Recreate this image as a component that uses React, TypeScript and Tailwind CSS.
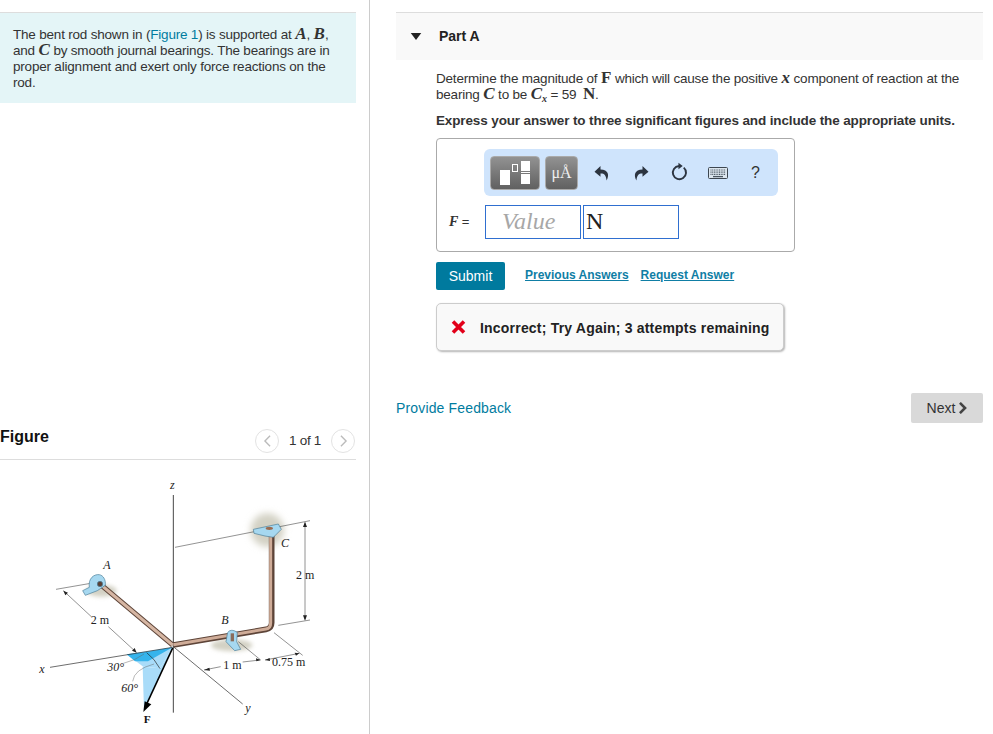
import React from "react";

const Math = ({ children, className = "" }: { children: React.ReactNode; className?: string }) => (
  <span className={`font-['Liberation_Serif',serif] italic font-bold text-[17px] tracking-normal leading-[0] ${className}`}>{children}</span>
);

function Diagram() {
  const serif = "'Liberation Serif', serif";
  const label = (x: number, y: number, t: string, italic = false, size = 36) => (
    <text x={x} y={y} fontFamily={serif} fontSize={size} fontStyle={italic ? "italic" : "normal"} fill="#222">
      {t}
    </text>
  );
  return (
    <svg viewBox="0 0 960 792" className="block w-[320px] h-[264px]">
      <defs>
        <filter id="b" x="-50%" y="-50%" width="200%" height="200%">
          <feGaussianBlur stdDeviation="11" />
        </filter>
        <filter id="b2" x="-50%" y="-50%" width="200%" height="200%">
          <feGaussianBlur stdDeviation="7" />
        </filter>
      </defs>
      <ellipse cx="742" cy="180" rx="50" ry="50" fill="#d3d1c4" filter="url(#b)" />
      <ellipse cx="245" cy="362" rx="45" ry="18" fill="#d3d1c4" filter="url(#b2)" />
      <ellipse cx="635" cy="526" rx="62" ry="18" fill="#d3d1c4" filter="url(#b2)" />

      <g stroke="#333" strokeWidth="1.6" fill="none">
        <path d="M465 232L870 152M775 466L870 450M108 358L212 340M130 362L214 440M265 470L350 548" />
        <path d="M855 158V448M762 488L848 556M655 515L722 570M735 570L838 550M552 600L602 590M668 576L720 570" />
      </g>
      <path d="M855 155l-6 16h12zM855 452l-6-16h12z" fill="#222" />
      <path d="M130 362l14 6-8 8zM350 548l-14-6 8-8zM552 600l16-7 2 9zM722 570l-14-5 1 9zM735 570l14-6 1 9zM838 550l-14-2 4 9z" fill="#222" />

      <path d="M368 590L420 595L458 532L372 722Z" fill="#a9dcf9" />
      <path d="M320 553L458 532L420 595L370 590Z" fill="#a9dcf9" />
      <path d="M320 553L384 545L458 532L384 574L345 574Z" fill="#36b4ec" />
      <g stroke="#222" strokeWidth="2" fill="none">
        <path d="M90 592L458 532" />
        <path d="M460 75V728" strokeWidth="2.5" />
        <path d="M460 530L668 702" />
        <path d="M380 548Q404 566 420 596" strokeWidth="2" />
        <path d="M310 580Q345 572 372 552" stroke="#666" strokeWidth="1.4" />
        <path d="M338 634Q342 598 402 582" stroke="#666" strokeWidth="1.4" />
      </g>
      <path d="M458 534L380 702" stroke="#000" strokeWidth="5" />
      <path d="M370 726L374 694L394 703Z" fill="#000" />

      <path d="M240 342L458 525" stroke="#5d4438" strokeWidth="15" fill="none" />
      <path d="M240 342L458 525" stroke="#d6b6a3" strokeWidth="9" fill="none" />
      <path d="M460 525L738 478Q755 475 755 458V196" stroke="#5d4438" strokeWidth="17" fill="none" />
      <path d="M460 524L738 477Q752 475 752 458V196" stroke="#cfac98" strokeWidth="9" fill="none" />

      <path d="M188 362L208 352C204 325 222 312 238 314C250 316 258 330 256 346L232 362L196 376Z" fill="#a6d8f0" stroke="#4a7c96" strokeWidth="2" />
      <circle cx="240" cy="342" r="8" fill="#5b4034" stroke="#4a7c96" strokeWidth="2" />
      <path d="M622 492C624 478 642 478 652 488L650 515L662 538L644 542L618 515Z" fill="#a6d8f0" stroke="#4a7c96" strokeWidth="2" />
      <path d="M632 490h10v24h-10z" fill="#8a6d5c" />
      <path d="M700 178L775 162L784 178L760 202L735 198L702 190Z" fill="#a6d8f0" stroke="#4a7c96" strokeWidth="2" />
      <ellipse cx="748" cy="175" rx="11" ry="5" fill="#9b6b50" />

      {label(450, 58, "z", true)}
      {label(250, 298, "A", true)}
      {label(604, 462, "B", true)}
      {label(783, 231, "C", true)}
      {label(58, 610, "x", true)}
      {label(676, 725, "y", true)}
      {label(828, 327, "2 m")}
      {label(212, 463, "2 m")}
      {label(610, 597, "1 m")}
      {label(756, 588, "0.75 m")}
      {label(262, 602, "30°", true)}
      {label(304, 667, "60°", true)}
      <text x="371" y="759" fontFamily={serif} fontSize="34" fontWeight="bold" fill="#111">F</text>
    </svg>
  );
}

const Undo = ({ flip = false }: { flip?: boolean }) => (
  <svg viewBox="0 0 16 16" className={`w-[16px] h-[16px] shrink-0 ${flip ? "-scale-x-100" : ""}`} fill="#2c3440">
    <path d="M6.5 1L0.5 6.8L6.5 11.8V8.6C10 8.4 12 10 12.6 15.5C15.5 10 14.5 4.6 6.5 4.4Z" />
  </svg>
);

const Keyboard = () => (
  <svg viewBox="0 0 20 12" className="w-[20px] h-[12px] shrink-0">
    <rect x="0.5" y="0.5" width="19" height="11" rx="1" fill="#dbe5ee" stroke="#3d4650" />
    <path d="M2.5 3H17.5M2.5 5.2H17.5M2.5 7.4H17.5" stroke="#4a5560" strokeWidth="1.2" strokeDasharray="1 0.7" />
    <path d="M5 9.6H15" stroke="#4a5560" strokeWidth="1.3" />
  </svg>
);

export default function App() {
  return (
    <div className="flex h-[734px] w-[993px] overflow-hidden bg-white font-['Liberation_Sans',Arial,sans-serif] text-[14px] leading-4 text-[#333]">
      <div className="w-[370px] shrink-0 border-r border-[#ccc] pt-3">
        <div className="w-[356px]">
          <div className="whitespace-nowrap border-t border-[#ddd] bg-[#e4f5f7] px-[13px] pb-[12px] pt-[14px] text-[13.5px] tracking-[-0.2px]">
            The bent rod shown in (<span className="text-[#007c9f]">Figure 1</span>) is supported at <Math>A</Math>, <Math>B</Math>,
            <br />
            and <Math>C</Math> by smooth journal bearings. The bearings are in
            <br />
            proper alignment and exert only force reactions on the
            <br />
            rod.
          </div>
          <div className="mt-[320px] flex h-[37px] items-center justify-between border-b border-[#ddd] pb-[8px]">
            <span className="text-[16px] font-bold text-[#111]">Figure</span>
            <div className="flex items-center gap-[10px] pr-[1px] pt-[7px]">
              <span className="flex h-[24px] w-[24px] items-center justify-center rounded-full border border-[#e3e3e3] text-[#bbb]">
                <svg viewBox="0 0 10 14" className="h-[12px] w-[9px]" fill="none" stroke="#bbb" strokeWidth="1.6"><path d="M8 1L2 7L8 13" /></svg>
              </span>
              <span className="text-[13.5px] tracking-[-0.3px] text-[#333]">1 of 1</span>
              <span className="flex h-[24px] w-[24px] items-center justify-center rounded-full border border-[#e3e3e3]">
                <svg viewBox="0 0 10 14" className="h-[12px] w-[9px]" fill="none" stroke="#bbb" strokeWidth="1.6"><path d="M2 1L8 7L2 13" /></svg>
              </span>
            </div>
          </div>
          <div className="ml-[20px] mt-[10px]">
            <Diagram />
          </div>
        </div>
      </div>

      <div className="ml-[26px] w-[587px] shrink-0 pt-3">
        <div className="flex h-[48px] items-center border-t border-[#ddd] bg-[#f9f9f9] pb-[2px]">
          <svg viewBox="0 0 12 8" className="ml-[14px] mt-[2px] h-[7px] w-[12px]" fill="#222"><path d="M0 0H12L6 8Z" /></svg>
          <span className="ml-[17px] font-bold text-[#222]">Part A</span>
        </div>
        <div className="pl-[40px]">
          <p className="mt-[11px] whitespace-nowrap text-[13.5px] tracking-[-0.2px]">
            Determine the magnitude of <Math className="not-italic">F</Math> which will cause the positive <Math className="text-[15px]">x</Math> component of reaction at the
            <br />
            bearing <Math>C</Math> to be <Math>C<sub className="text-[10px]">x</sub></Math> = 59 <span className="ml-[3px] font-['Liberation_Serif',serif] text-[17px] font-bold leading-[0]">N</span>.
          </p>
          <p className="mt-[10px] whitespace-nowrap text-[13.5px] font-bold tracking-[-0.13px]">Express your answer to three significant figures and include the appropriate units.</p>

          <div className="mt-[9px] h-[114px] w-[359px] rounded-[4px] border border-[#aaa] pl-[47px] pt-[10px]">
            <div className="flex h-[47px] w-[294px] items-center rounded-[6px] bg-[#cfe4fc] pl-[6px] text-[#333]">
              <div className="flex h-[34px] w-[50px] shrink-0 items-center justify-center gap-[2px] rounded-[4px] border border-[#aaa] bg-gradient-to-b from-[#929292] to-[#616161]">
                <span className="mt-[10px] block h-[15px] w-[10px] bg-white" />
                <span className="mb-[10px] block h-[8px] w-[6px] border border-white" />
                <span className="ml-[1px] flex flex-col gap-[1px]">
                  <span className="block h-[10px] w-[9px] bg-white" />
                  <span className="block h-[1px] w-[9px] bg-white" />
                  <span className="block h-[10px] w-[9px] bg-white" />
                </span>
              </div>
              <div className="ml-[5px] flex h-[34px] w-[33px] shrink-0 items-center justify-center rounded-[4px] border border-[#aaa] bg-gradient-to-b from-[#929292] to-[#616161] font-['Liberation_Serif',serif] text-[16px] text-[#eee]">
                μÅ
              </div>
              <div className="ml-[16px] flex w-[16px] justify-center"><Undo /></div>
              <div className="ml-[23px] flex w-[16px] justify-center"><Undo flip /></div>
              <div className="ml-[22px] flex w-[16px] justify-center">
                <svg viewBox="0 0 16 16" className="h-[17px] w-[17px] shrink-0 overflow-visible" fill="none" stroke="#2c3440" strokeWidth="1.8">
                  <path d="M12 3.4A6.2 6.2 0 1 1 7.5 1.9" />
                  <path d="M7 -1.2L7 5L11 1.8Z" fill="#2c3440" stroke="none" />
                </svg>
              </div>
              <div className="ml-[21px] flex w-[20px] justify-center"><Keyboard /></div>
              <div className="ml-[23px] text-[16px] text-[#333]">?</div>
            </div>
            <div className="-ml-[35px] mt-[9px] flex h-[34px] items-center">
              <span className="w-[36px] font-['Liberation_Serif',serif] text-[14px]"><b><i>F</i></b> <span className="font-['Liberation_Sans',sans-serif] text-[13px]">=</span></span>
              <div className="h-[34px] w-[96px] border border-[#2f6fd0] pl-[16px] font-['Liberation_Serif',serif] text-[24px] italic leading-[31px] text-[#a7a7a7]">Value</div>
              <div className="ml-[2px] h-[34px] w-[96px] border border-[#2f6fd0] pl-[2px] font-['Liberation_Serif',serif] text-[24px] leading-[31px] text-[#222]">N</div>
            </div>
          </div>

          <div className="mt-[10px] flex items-start">
            <div className="flex h-[28px] w-[69px] items-center justify-center rounded-[2px] bg-[#007a9e] text-white">Submit</div>
            <span className="ml-[20px] mt-[5px] text-[12px] font-bold text-[#0f7ea5] underline">Previous Answers</span>
            <span className="ml-[12px] mt-[5px] text-[12px] font-bold text-[#0f7ea5] underline">Request Answer</span>
          </div>

          <div className="mt-[13px] flex h-[48px] w-[348px] items-center rounded-[5px] border border-[#ccc] bg-[#f9f9f9] pl-[14px] shadow-[1px_1px_2px_rgba(0,0,0,0.3)]">
            <svg viewBox="0 0 14 14" className="h-[14px] w-[15px]" stroke="#e2001a" strokeWidth="3.6" fill="none"><path d="M1.5 1.5L12.5 12.5M12.5 1.5L1.5 12.5" /></svg>
            <span className="ml-[14px] whitespace-nowrap pt-[1px] font-bold tracking-[0.2px] text-[#222]">Incorrect; Try Again; 3 attempts remaining</span>
          </div>
        </div>

        <div className="mt-[42px] flex items-center justify-between">
          <span className="tracking-[0.15px] text-[#007c9f]">Provide Feedback</span>
          <div className="flex h-[30px] w-[72px] items-center justify-center gap-[3px] rounded-[2px] bg-[#d9d9d9] text-[#333]">
            Next
            <svg viewBox="0 0 10 14" className="h-[12px] w-[9px]" fill="none" stroke="#444" strokeWidth="3"><path d="M2 1L8 7L2 13" /></svg>
          </div>
        </div>
      </div>
    </div>
  );
}
